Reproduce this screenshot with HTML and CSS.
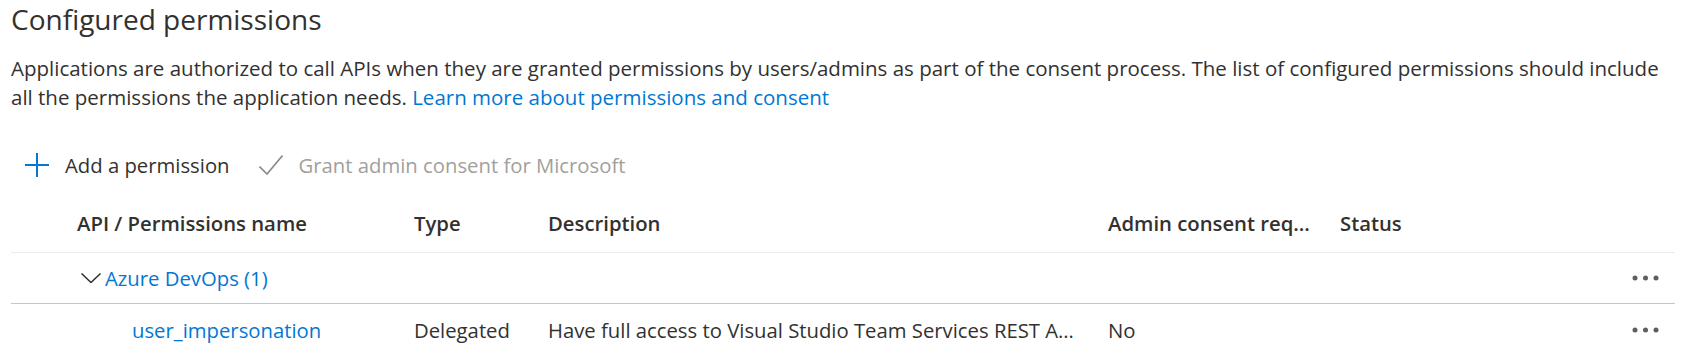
FILE: index.html
```html
<!DOCTYPE html>
<html lang="en">
<head>
    <meta charset="UTF-8">
    <title>Configured permissions</title>
    <link rel="stylesheet" href="styles.css">
</head>
<body>
    <div class="page">
        <h2 class="section-title">Configured permissions</h2>
        <p class="intro">Applications are authorized to call APIs when they are granted permissions by users/admins as part of the consent process. The list of configured permissions should include all the permissions the application needs. <a href="#">Learn more about permissions and consent</a></p>

        <div class="toolbar">
            <button type="button" class="tool-btn">
                <svg class="icon-plus" width="24" height="24" viewBox="0 0 24 24"><path d="M12 0v24M0 12h24" /></svg>
                Add a permission
            </button>
            <button type="button" class="tool-btn disabled">
                <svg class="icon-check" width="24" height="24" viewBox="0 0 24 24"><path d="M0.5 15.5L8 23L23.5 4.5" /></svg>
                Grant admin consent for Microsoft
            </button>
        </div>

        <div class="perm-grid">
            <div class="row head">
                <div class="cell name">API / Permissions name</div>
                <div class="cell">Type</div>
                <div class="cell">Description</div>
                <div class="cell">Admin consent required</div>
                <div class="cell">Status</div>
                <div class="cell actions"></div>
            </div>
            <div class="row group">
                <div class="cell name">
                    <svg class="chevron" width="20" height="10" viewBox="0 0 20 10"><path d="M0.5 0.5L10 9.5L19.5 0.5" /></svg>
                    <a href="#">Azure DevOps (1)</a>
                </div>
                <div class="cell"></div>
                <div class="cell"></div>
                <div class="cell"></div>
                <div class="cell"></div>
                <div class="cell actions">
                    <svg class="more" width="27" height="6" viewBox="0 0 27 6"><circle cx="3" cy="3" r="2.5" /><circle cx="13.5" cy="3" r="2.5" /><circle cx="24" cy="3" r="2.5" /></svg>
                </div>
            </div>
            <div class="row item">
                <div class="cell name"><a href="#">user_impersonation</a></div>
                <div class="cell">Delegated</div>
                <div class="cell">Have full access to Visual Studio Team Services REST APIs</div>
                <div class="cell">No</div>
                <div class="cell"></div>
                <div class="cell actions">
                    <svg class="more" width="27" height="6" viewBox="0 0 27 6"><circle cx="3" cy="3" r="2.5" /><circle cx="13.5" cy="3" r="2.5" /><circle cx="24" cy="3" r="2.5" /></svg>
                </div>
            </div>
        </div>
    </div>
</body>
</html>
```

FILE: styles.css
```css
body {
    margin: 0;
    font-family: "Open Sans", "Noto Sans", sans-serif;
    color: #323130;
    background-color: #ffffff;
}
a {
    color: #0078d4;
    text-decoration: none;
}
.page {
    padding: 0 13px 0 11px;
}
.section-title {
    margin: 0;
    font-size: 28px;
    font-weight: 400;
    line-height: 39px;
}
.intro {
    margin: 15px 0 0;
    padding-right: 8px;
    font-size: 20.5px;
    line-height: 29px;
}

/* command bar */
.toolbar {
    display: flex;
    align-items: center;
    height: 40px;
    margin-top: 33px;
}
.tool-btn {
    display: flex;
    align-items: center;
    gap: 16px;
    height: 40px;
    padding: 0 14px;
    border: none;
    background: none;
    font-family: inherit;
    font-size: 20.3px;
    color: #323130;
    cursor: pointer;
}
.tool-btn + .tool-btn {
    padding-left: 15px;
}
.tool-btn.disabled {
    color: #a19f9d;
    cursor: default;
}
.icon-plus path {
    stroke: #0078d4;
    stroke-width: 2;
    fill: none;
}
.icon-check {
    margin-top: -4px;
}
.icon-check path {
    stroke: #8a8886;
    stroke-width: 1.6;
    fill: none;
}

/* list */
.perm-grid {
    margin-top: 9px;
    font-size: 20.3px;
}
.row {
    display: grid;
    grid-template-columns: 403px 134px 560px 232px 1fr 60px;
    align-items: center;
    height: 51px;
    border-top: 1px solid #c8c6c4;
}
.row.head {
    height: 58px;
    border-top: none;
    border-bottom: 1px solid #edebe9;
    font-weight: 600;
}
.row.group {
    height: 50px;
    border-top: none;
}
.cell {
    padding-right: 28px;
    white-space: nowrap;
    overflow: hidden;
    text-overflow: ellipsis;
}
.head .name {
    padding-left: 66px;
}
.group .name {
    display: flex;
    align-items: center;
    gap: 4px;
    padding-left: 70px;
}
.item .name {
    padding-left: 121px;
}
.chevron path {
    stroke: #323130;
    stroke-width: 1.5;
    fill: none;
}
.actions {
    display: flex;
    justify-content: center;
    padding-right: 0;
}
.more circle {
    fill: #605e5c;
}
```
